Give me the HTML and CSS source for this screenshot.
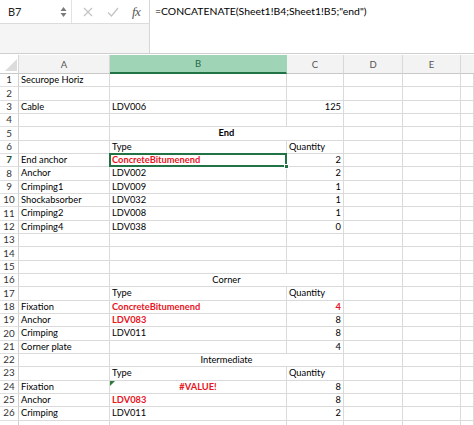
FILE: index.html
```html
<!DOCTYPE html>
<html>
<head>
<meta charset="utf-8">
<link rel="stylesheet" href="styles.css">
</head>
<body>
<div class="app">
  <div class="fbar">
    <div class="fleft">
      <div class="tools">
        <span class="namebox">B7</span>
        <svg class="spin" width="7" height="12" viewBox="0 0 7 12"><path d="M3.5 1 L6.5 5 L0.5 5 Z" fill="#7a7a7a"/><path d="M3.5 11 L6.5 7 L0.5 7 Z" fill="#7a7a7a"/></svg>
        <span class="sep"></span>
        <svg class="ico x" width="10" height="10" viewBox="0 0 10 10"><path d="M1 1 L9 9 M9 1 L1 9" stroke="#c4c4c4" stroke-width="1.3" fill="none"/></svg>
        <svg class="ico ok" width="12" height="10" viewBox="0 0 12 10"><path d="M1 5.5 L4.5 9 L11 1" stroke="#c4c4c4" stroke-width="1.3" fill="none"/></svg>
        <span class="fx">fx</span>
      </div>
      <div class="graybox"></div>
    </div>
    <div class="formula">=CONCATENATE(Sheet1!B4;Sheet1!B5;"end")</div>
  </div>
  <div class="sheet">
    <div class="hd corner"><svg width="14" height="14" viewBox="0 0 14 14"><path d="M14 2 L14 14 L2 14 Z" fill="#dcdcdc"/></svg></div>
    <div class="hd">A</div><div class="hd selc">B</div><div class="hd">C</div><div class="hd">D</div><div class="hd">E</div><div class="hd last"></div>

    <div class="rh">1</div><div class="c">Securope Horiz</div><div class="c"></div><div class="c"></div><div class="c"></div><div class="c"></div><div class="c"></div>
    <div class="rh">2</div><div class="c"></div><div class="c"></div><div class="c"></div><div class="c"></div><div class="c"></div><div class="c"></div>
    <div class="rh">3</div><div class="c">Cable</div><div class="c">LDV006</div><div class="c n">125</div><div class="c"></div><div class="c"></div><div class="c"></div>
    <div class="rh">4</div><div class="c"></div><div class="c"></div><div class="c"></div><div class="c"></div><div class="c"></div><div class="c"></div>
    <div class="rh">5</div><div class="c"></div><div class="c m b">End</div><div class="c"></div><div class="c"></div><div class="c"></div>
    <div class="rh">6</div><div class="c"></div><div class="c">Type</div><div class="c">Quantity</div><div class="c"></div><div class="c"></div><div class="c"></div>
    <div class="rh selr">7</div><div class="c">End anchor</div><div class="c sel red">ConcreteBitumenend</div><div class="c n">2</div><div class="c"></div><div class="c"></div><div class="c"></div>
    <div class="rh">8</div><div class="c">Anchor</div><div class="c">LDV002</div><div class="c n">2</div><div class="c"></div><div class="c"></div><div class="c"></div>
    <div class="rh">9</div><div class="c">Crimping1</div><div class="c">LDV009</div><div class="c n">1</div><div class="c"></div><div class="c"></div><div class="c"></div>
    <div class="rh">10</div><div class="c">Shockabsorber</div><div class="c">LDV032</div><div class="c n">1</div><div class="c"></div><div class="c"></div><div class="c"></div>
    <div class="rh">11</div><div class="c">Crimping2</div><div class="c">LDV008</div><div class="c n">1</div><div class="c"></div><div class="c"></div><div class="c"></div>
    <div class="rh">12</div><div class="c">Crimping4</div><div class="c">LDV038</div><div class="c n">0</div><div class="c"></div><div class="c"></div><div class="c"></div>
    <div class="rh">13</div><div class="c"></div><div class="c"></div><div class="c"></div><div class="c"></div><div class="c"></div><div class="c"></div>
    <div class="rh">14</div><div class="c"></div><div class="c"></div><div class="c"></div><div class="c"></div><div class="c"></div><div class="c"></div>
    <div class="rh">15</div><div class="c"></div><div class="c"></div><div class="c"></div><div class="c"></div><div class="c"></div><div class="c"></div>
    <div class="rh">16</div><div class="c"></div><div class="c m">Corner</div><div class="c"></div><div class="c"></div><div class="c"></div>
    <div class="rh">17</div><div class="c"></div><div class="c">Type</div><div class="c">Quantity</div><div class="c"></div><div class="c"></div><div class="c"></div>
    <div class="rh">18</div><div class="c">Fixation</div><div class="c red">ConcreteBitumenend</div><div class="c n red">4</div><div class="c"></div><div class="c"></div><div class="c"></div>
    <div class="rh">19</div><div class="c">Anchor</div><div class="c red">LDV083</div><div class="c n">8</div><div class="c"></div><div class="c"></div><div class="c"></div>
    <div class="rh">20</div><div class="c">Crimping</div><div class="c">LDV011</div><div class="c n">8</div><div class="c"></div><div class="c"></div><div class="c"></div>
    <div class="rh">21</div><div class="c">Corner plate</div><div class="c"></div><div class="c n">4</div><div class="c"></div><div class="c"></div><div class="c"></div>
    <div class="rh">22</div><div class="c"></div><div class="c m">Intermediate</div><div class="c"></div><div class="c"></div><div class="c"></div>
    <div class="rh">23</div><div class="c"></div><div class="c">Type</div><div class="c">Quantity</div><div class="c"></div><div class="c"></div><div class="c"></div>
    <div class="rh">24</div><div class="c">Fixation</div><div class="c red ctr err">#VALUE!</div><div class="c n">8</div><div class="c"></div><div class="c"></div><div class="c"></div>
    <div class="rh">25</div><div class="c">Anchor</div><div class="c red">LDV083</div><div class="c n">8</div><div class="c"></div><div class="c"></div><div class="c"></div>
    <div class="rh">26</div><div class="c">Crimping</div><div class="c">LDV011</div><div class="c n">2</div><div class="c"></div><div class="c"></div><div class="c"></div>
    <div class="rh"></div><div class="c"></div><div class="c"></div><div class="c"></div><div class="c"></div><div class="c"></div><div class="c"></div>
  </div>
</div>
</body>
</html>
```
FILE: styles.css
```css
html, body {
  margin: 0;
  padding: 0;
  background: #ffffff;
}
body {
  font-family: Lato, "Liberation Sans", sans-serif;
  color: #1a1a1a;
  width: 474px;
  height: 425px;
  overflow: hidden;
}
.app {
  display: flex;
  flex-direction: column;
}
.fbar {
  display: flex;
  height: 54px;
  border-bottom: 1px solid #cfcfcf;
  box-sizing: border-box;
}
.fleft {
  width: 150px;
  display: flex;
  flex-direction: column;
  flex: none;
}
.tools {
  height: 23px;
  display: flex;
  align-items: center;
  border-right: 1px solid #d6d6d6;
  box-sizing: border-box;
}
.namebox {
  font-size: 11px;
  width: 52px;
  padding-left: 8px;
  color: #222;
}
.spin {
  margin-right: 4px;
}
.sep {
  width: 1px;
  height: 23px;
  background: #e2e2e2;
  margin-right: 11px;
}
.ico.x {
  margin-right: 14px;
}
.ico.ok {
  margin-right: 13px;
}
.fx {
  font-family: "Liberation Serif", serif;
  font-style: italic;
  font-size: 13px;
  color: #555;
  letter-spacing: -0.5px;
}
.graybox {
  flex: 1;
  background: #f5f5f5;
  border-top: 1px solid #dcdcdc;
  border-right: 1px solid #d6d6d6;
  box-sizing: border-box;
}
.formula {
  flex: 1;
  font-size: 10.4px;
  padding: 5px 0 0 5px;
  color: #000;
  white-space: nowrap;
}
.sheet {
  margin-top: 1px;
  display: grid;
  grid-template-columns: 19px 91px 177px 57px 59px 58px 1fr;
  grid-template-rows: 19px;
  grid-auto-rows: 13.333px;
}
.hd {
  background: #f3f3f3;
  border-right: 1px solid #d8d8d8;
  border-bottom: 1px solid #c8c8c8;
  box-sizing: border-box;
  font-size: 9.5px;
  color: #555;
  display: flex;
  align-items: center;
  justify-content: center;
}
.hd.corner {
  background: #ffffff;
  justify-content: flex-end;
  align-items: flex-end;
  padding: 0 1px 2px 0;
}
.hd.selc {
  background: #9fd5b6;
  color: #1f6b40;
  border-bottom: 2px solid #217346;
  border-right-color: #9fd5b6;
}
.hd.last {
  border-right: none;
}
.rh {
  border-right: 1px solid #d0d0d0;
  border-bottom: 1px solid #e0e0e0;
  box-sizing: border-box;
  font-size: 9.8px;
  color: #333;
  display: flex;
  align-items: center;
  justify-content: center;
  line-height: 1;
}
.rh.selr {
  font-weight: 700;
  color: #1d4a30;
}
.c {
  border-right: 1px solid #dadada;
  border-bottom: 1px solid #dadada;
  box-sizing: border-box;
  font-size: 9.3px;
  line-height: 12px;
  padding: 0 2px;
  white-space: nowrap;
  overflow: visible;
  display: flex;
  align-items: center;
  color: #000;
}
.c.n {
  justify-content: flex-end;
}
.c.m {
  grid-column: span 2;
  justify-content: center;
}
.c.b {
  font-weight: 700;
}
.c.red {
  color: #e8141e;
  font-weight: 700;
}
.c.ctr {
  justify-content: center;
}
.c.sel {
  position: relative;
}
.c.sel::before {
  content: "";
  position: absolute;
  left: -1px;
  top: -1px;
  right: -1px;
  bottom: -1px;
  border: 2px solid #217346;
}
.c.sel::after {
  content: "";
  position: absolute;
  right: -3px;
  bottom: -3px;
  width: 5px;
  height: 5px;
  background: #217346;
  border: 1px solid #fff;
  box-sizing: border-box;
}
.c.err {
  position: relative;
}
.c.err::before {
  content: "";
  position: absolute;
  left: 0;
  top: 0;
  border-top: 5px solid #2d7a3a;
  border-right: 5px solid transparent;
}
```
